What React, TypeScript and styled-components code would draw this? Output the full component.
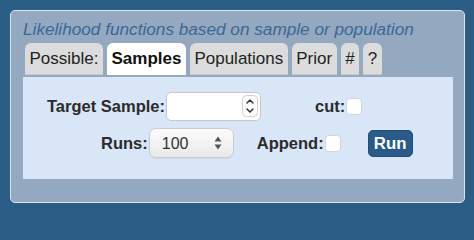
import React from "react";
import styled, { createGlobalStyle } from "styled-components";

const Global = createGlobalStyle`
  html, body { margin: 0; padding: 0; background: #2a5e87; }
  body { font-family: "Liberation Sans", Arial, Helvetica, sans-serif; }
  * { box-sizing: border-box; }
`;

const Page = styled.div`
  width: 474px;
  height: 213px;
  padding: 10px 9px 10px 10px;
  background: #2a5e87;
`;

const Panel = styled.div`
  width: 455px;
  height: 193px;
  border: 1px solid #dde5ee;
  border-radius: 5px;
  background: #94a8c0;
  padding: 8px 11px 0 12px;
  display: flex;
  flex-direction: column;
`;

const Title = styled.div`
  font-style: italic;
  font-size: 17.2px;
  line-height: 20px;
  color: #3a6896;
  white-space: nowrap;
`;

const TabList = styled.div`
  display: flex;
  gap: 4px;
  margin-top: 4px;
  padding-left: 2px;
  height: 34px;
`;

const Tab = styled.div<{ $active?: boolean }>`
  height: 32px;
  padding: 6px 4.5px 0;
  border-radius: 6px 6px 0 0;
  background: ${(p) => (p.$active ? "#ffffff" : "#dcdcdc")};
  font-size: 17px;
  line-height: 20px;
  font-weight: ${(p) => (p.$active ? 700 : 400)};
  color: ${(p) => (p.$active ? "#111" : "#222")};
  white-space: nowrap;
  box-shadow: ${(p) => (p.$active ? "none" : "inset 0 -1px 0 #c8c8c8")};
`;

const Pane = styled.div`
  width: 430px;
  height: 102px;
  background: #d9e6f7;
  padding-top: 15px;
  display: flex;
  flex-direction: column;
  gap: 7px;
`;

const Row = styled.div<{ $indent: number }>`
  display: flex;
  align-items: center;
  margin-left: ${(p) => p.$indent}px;
  height: ${(p) => (p.$indent > 50 ? 30 : 29)}px;
`;

const Label = styled.span<{ $gap?: number }>`
  font-weight: 700;
  font-size: 16.5px;
  color: #2b2b2b;
  margin-left: ${(p) => p.$gap ?? 0}px;
  white-space: nowrap;
`;

const Field = styled.div`
  position: relative;
  margin-left: 1px;
  width: 95px;
  height: 29px;
  background: #fff;
  border: 1px solid #c4c8cc;
  border-radius: 5px;
  display: flex;
  align-items: center;
`;

const TextInput = styled.input`
  border: none;
  outline: none;
  background: transparent;
  width: 70px;
  height: 100%;
  padding: 0 6px;
  font-size: 16px;
  font-family: inherit;
`;

const Spinner = styled.svg`
  position: absolute;
  right: 2px;
  top: 2px;
`;

const SelectWrap = styled.div`
  position: relative;
  margin-left: 1px;
`;

const Select = styled.select`
  appearance: none;
  -webkit-appearance: none;
  width: 85px;
  height: 30px;
  border: 1px solid #c9ccd0;
  border-radius: 7px;
  background: linear-gradient(#fcfcfc, #e9e9e9);
  box-shadow: 0 1px 1px rgba(0, 0, 0, 0.06);
  padding: 0 0 0 12px;
  font-family: inherit;
  font-size: 16px;
  color: #333;
  outline: none;
`;

const SelectArrows = styled.svg`
  position: absolute;
  right: 12px;
  top: 8px;
  pointer-events: none;
`;

const Check = styled.input`
  appearance: none;
  -webkit-appearance: none;
  margin: 0 0 0 1px;
  width: 16px;
  height: 17px;
  background: #fff;
  border: 1px solid #d2d6db;
  border-radius: 4px;
`;

const RunButton = styled.button`
  margin-left: 27px;
  width: 45px;
  height: 27px;
  border: 1px solid #1f4f7a;
  border-radius: 5px;
  background: #285b8a;
  color: #fff;
  font-family: inherit;
  font-weight: 700;
  font-size: 16.8px;
  padding: 0;
  line-height: 25px;
`;

export default function App() {
  return (
    <>
      <Global />
      <Page>
        <Panel>
          <Title>Likelihood functions based on sample or population</Title>
          <TabList>
            <Tab>Possible:</Tab>
            <Tab $active>Samples</Tab>
            <Tab>Populations</Tab>
            <Tab>Prior</Tab>
            <Tab>#</Tab>
            <Tab>?</Tab>
          </TabList>
          <Pane>
            <Row $indent={24}>
              <Label>Target Sample:</Label>
              <Field>
                <TextInput type="text" />
                <Spinner width="16" height="22" viewBox="0 0 16 22">
                  <rect x="0.5" y="0.5" width="15" height="21" rx="4" fill="#fff" stroke="#d0d0d0" />
                  <path d="M5 8 L8 5 L11 8" fill="none" stroke="#333" strokeWidth="1.5" strokeLinecap="round" strokeLinejoin="round" />
                  <path d="M5 14 L8 17 L11 14" fill="none" stroke="#333" strokeWidth="1.5" strokeLinecap="round" strokeLinejoin="round" />
                </Spinner>
              </Field>
              <Label $gap={54}>cut:</Label>
              <Check type="checkbox" />
            </Row>
            <Row $indent={78}>
              <Label>Runs:</Label>
              <SelectWrap>
                <Select defaultValue="100">
                  <option value="100">100</option>
                  <option value="1000">1000</option>
                </Select>
                <SelectArrows width="8" height="14" viewBox="0 0 8 14">
                  <path d="M0.5 5.5 L4 0.5 L7.5 5.5 Z" fill="#555" />
                  <path d="M0.5 8.5 L4 13.5 L7.5 8.5 Z" fill="#555" />
                </SelectArrows>
              </SelectWrap>
              <Label $gap={23}>Append:</Label>
              <Check type="checkbox" />
              <RunButton>Run</RunButton>
            </Row>
          </Pane>
        </Panel>
      </Page>
    </>
  );
}
